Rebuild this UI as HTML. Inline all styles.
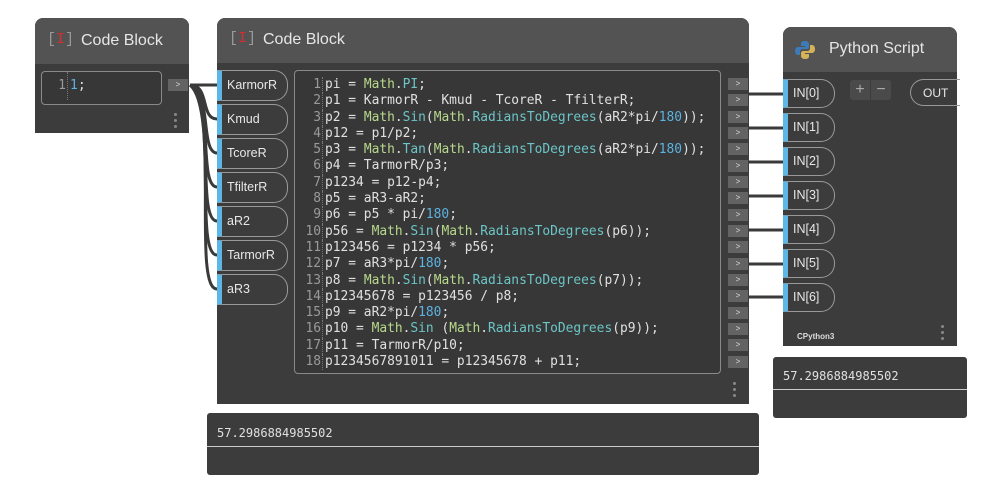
<!DOCTYPE html><html><head><style>
body{margin:0;width:992px;height:486px;background:#fff;position:relative;overflow:hidden;font-family:"Liberation Sans",sans-serif}
.a{position:absolute}
.node{position:absolute;background:#3c3c3c;border-radius:8px 8px 0 0}
.hdr{position:absolute;left:0;right:0;top:0;background:#535353;border-radius:8px 8px 0 0;color:#e6e6e6;font-size:16px}
.ed{position:absolute;background:#373737;border:1px solid #8a8a8a;border-radius:4px;font-family:"DejaVu Sans Mono","Liberation Mono",monospace;font-size:12.9px;color:#e0e0e0}
.ln{display:inline-block;width:26px;text-align:right;color:#9a9a9a;border-right:1px dotted #777;padding-right:1px;margin-right:2px}
.m{color:#b8d98c}.f{color:#6cc5c7}.n{color:#5cb2e0}
.port{position:absolute;width:20px;height:12px;background:#636363;color:#ddd;font-size:8px;text-align:center;line-height:12px}
.inp{position:absolute;height:29px;border:1px solid #999;border-left:5px solid #5db7e6;border-radius:0 14px 14px 0;background:#3c3c3c;color:#e8e8e8;font-size:12.5px;line-height:29px;padding-left:5px;box-sizing:content-box}
.dots{position:absolute;width:3px}
.dots i{display:block;width:3px;height:3px;background:#888;border-radius:50%;margin-bottom:3px}
.watch{position:absolute;background:#3c3c3c;border-radius:3px;font-family:"DejaVu Sans Mono","Liberation Mono",monospace;font-size:12px;color:#e0e0e0}
.br{color:#999;font-family:"Liberation Mono",monospace;font-size:15px}
.br b{color:#d03030;font-weight:normal}
</style></head><body>
<svg class="a" style="left:0;top:0" width="992" height="486">
<g stroke="#3a3a3a" stroke-width="3" fill="none">
<path d="M190 85 C205 85,205 85,217 85"/>
<path d="M190 85 C210 85,200 119,217 119"/>
<path d="M190 85 C212 90,200 153,217 153"/>
<path d="M190 85 C214 95,198 187,217 187"/>
<path d="M190 85 C216 100,196 221,217 221"/>
<path d="M190 85 C218 105,194 255,217 255"/>
<path d="M190 85 C220 110,192 289,217 289"/>
<path d="M749 94 L783 94"/><path d="M749 128 L783 128"/><path d="M749 162 L783 162"/><path d="M749 196 L783 196"/><path d="M749 230 L783 230"/><path d="M749 264 L783 264"/><path d="M749 297 L783 297"/>
</g></svg>

<div class="node" style="left:35px;top:18px;width:154px;height:115px">
<div class="hdr" style="height:46px"><span class="a br" style="left:12px;top:13px">[<b>I</b>]</span><span class="a" style="left:46px;top:14px">Code Block</span></div>
<div class="ed" style="left:6px;top:53px;width:119px;height:32px;line-height:28px;font-size:13px"><span class="ln" style="width:24px">1</span><span class="n">1</span>;</div>
<div class="port" style="left:133px;top:61px">&gt;</div>
<div class="dots" style="left:139px;top:95px"><i></i><i></i><i></i></div>
</div>

<div class="node" style="left:217px;top:18px;width:532px;height:386px">
<div class="hdr" style="height:45px"><span class="a br" style="left:12px;top:12px">[<b>I</b>]</span><span class="a" style="left:46px;top:13px">Code Block</span></div>
<div class="dots" style="left:516px;top:364px"><i></i><i></i><i></i></div>
</div>
<div class="inp" style="left:217px;top:70px;width:60px">KarmorR</div>
<div class="inp" style="left:217px;top:104px;width:60px">Kmud</div>
<div class="inp" style="left:217px;top:138px;width:60px">TcoreR</div>
<div class="inp" style="left:217px;top:172px;width:60px">TfilterR</div>
<div class="inp" style="left:217px;top:206px;width:60px">aR2</div>
<div class="inp" style="left:217px;top:240px;width:60px">TarmorR</div>
<div class="inp" style="left:217px;top:274px;width:60px">aR3</div>

<div class="ed" style="left:294px;top:70px;width:427px;height:304px;padding-top:6px;box-sizing:border-box;line-height:16.3px;white-space:pre;overflow:hidden"><span class="ln">1</span>pi = <span class="m">Math</span>.<span class="f">PI</span>;
<span class="ln">2</span>p1 = KarmorR - Kmud - TcoreR - TfilterR;
<span class="ln">3</span>p2 = <span class="m">Math</span>.<span class="f">Sin</span>(<span class="m">Math</span>.<span class="f">RadiansToDegrees</span>(aR2*pi/<span class="n">180</span>));
<span class="ln">4</span>p12 = p1/p2;
<span class="ln">5</span>p3 = <span class="m">Math</span>.<span class="f">Tan</span>(<span class="m">Math</span>.<span class="f">RadiansToDegrees</span>(aR2*pi/<span class="n">180</span>));
<span class="ln">6</span>p4 = TarmorR/p3;
<span class="ln">7</span>p1234 = p12-p4;
<span class="ln">8</span>p5 = aR3-aR2;
<span class="ln">9</span>p6 = p5 * pi/<span class="n">180</span>;
<span class="ln">10</span>p56 = <span class="m">Math</span>.<span class="f">Sin</span>(<span class="m">Math</span>.<span class="f">RadiansToDegrees</span>(p6));
<span class="ln">11</span>p123456 = p1234 * p56;
<span class="ln">12</span>p7 = aR3*pi/<span class="n">180</span>;
<span class="ln">13</span>p8 = <span class="m">Math</span>.<span class="f">Sin</span>(<span class="m">Math</span>.<span class="f">RadiansToDegrees</span>(p7));
<span class="ln">14</span>p12345678 = p123456 / p8;
<span class="ln">15</span>p9 = aR2*pi/<span class="n">180</span>;
<span class="ln">16</span>p10 = <span class="m">Math</span>.<span class="f">Sin</span> (<span class="m">Math</span>.<span class="f">RadiansToDegrees</span>(p9));
<span class="ln">17</span>p11 = TarmorR/p10;
<span class="ln">18</span>p1234567891011 = p12345678 + p11;</div>

<div class="port" style="left:728px;top:78px">&gt;</div><div class="port" style="left:728px;top:94px">&gt;</div><div class="port" style="left:728px;top:111px">&gt;</div><div class="port" style="left:728px;top:127px">&gt;</div><div class="port" style="left:728px;top:143px">&gt;</div><div class="port" style="left:728px;top:160px">&gt;</div><div class="port" style="left:728px;top:176px">&gt;</div><div class="port" style="left:728px;top:192px">&gt;</div><div class="port" style="left:728px;top:209px">&gt;</div><div class="port" style="left:728px;top:225px">&gt;</div><div class="port" style="left:728px;top:241px">&gt;</div><div class="port" style="left:728px;top:258px">&gt;</div><div class="port" style="left:728px;top:274px">&gt;</div><div class="port" style="left:728px;top:290px">&gt;</div><div class="port" style="left:728px;top:307px">&gt;</div><div class="port" style="left:728px;top:323px">&gt;</div><div class="port" style="left:728px;top:339px">&gt;</div><div class="port" style="left:728px;top:356px">&gt;</div>

<div class="node" style="left:783px;top:27px;width:174px;height:319px">
<div class="hdr" style="height:45px">
<svg class="a" style="left:12px;top:13px" width="20" height="20" viewBox="0 0 20 20"><path d="M10 1c-4 0-4 2-4 3v2h4v1H3c-2 0-3 2-3 4s1 4 3 4h2v-3c0-2 1-3 3-3h4c1 0 2-1 2-2V4c0-2-2-3-4-3z" fill="#3d7ab8"/><path d="M10 19c4 0 4-2 4-3v-2h-4v-1h7c2 0 3-2 3-4s-1-4-3-4h-2v3c0 2-1 3-3 3H8c-1 0-2 1-2 2v3c0 2 2 3 4 3z" fill="#d4b25a"/></svg>
<span class="a" style="left:46px;top:13px">Python Script</span></div>
<div class="a" style="left:67px;top:53px;width:20px;height:20px;background:#4a4a4a;color:#aaa;text-align:center;line-height:20px;font-size:16px;border-radius:3px 0 0 3px">+</div>
<div class="a" style="left:88px;top:53px;width:20px;height:20px;background:#4a4a4a;color:#aaa;text-align:center;line-height:20px;font-size:16px;border-radius:0 3px 3px 0">−</div>
<div class="a" style="left:127px;top:52px;width:50px;height:27px;border:1px solid #999;border-right:none;border-radius:14px 0 0 14px;color:#e8e8e8;font-size:12px;line-height:27px;padding-left:12px;box-sizing:border-box">OUT</div>
<div class="a" style="left:14px;top:305px;color:#ddd;font-size:8px;font-weight:bold">CPython3</div>
<div class="dots" style="left:158px;top:298px"><i></i><i></i><i></i></div>
</div>
<div class="inp" style="left:783px;top:79px;width:41px;height:27px;line-height:27px">IN[0]</div>
<div class="inp" style="left:783px;top:113px;width:41px;height:27px;line-height:27px">IN[1]</div>
<div class="inp" style="left:783px;top:147px;width:41px;height:27px;line-height:27px">IN[2]</div>
<div class="inp" style="left:783px;top:181px;width:41px;height:27px;line-height:27px">IN[3]</div>
<div class="inp" style="left:783px;top:215px;width:41px;height:27px;line-height:27px">IN[4]</div>
<div class="inp" style="left:783px;top:249px;width:41px;height:27px;line-height:27px">IN[5]</div>
<div class="inp" style="left:783px;top:283px;width:41px;height:27px;line-height:27px">IN[6]</div>

<div class="watch" style="left:773px;top:357px;width:194px;height:61px"><div class="a" style="left:10px;top:12px">57.2986884985502</div><div class="a" style="left:0;right:0;top:32px;height:1px;background:#ccc"></div></div>
<div class="watch" style="left:207px;top:413px;width:552px;height:62px"><div class="a" style="left:10px;top:13px">57.2986884985502</div><div class="a" style="left:0;right:0;top:33px;height:1px;background:#ccc"></div></div>
</body></html>
